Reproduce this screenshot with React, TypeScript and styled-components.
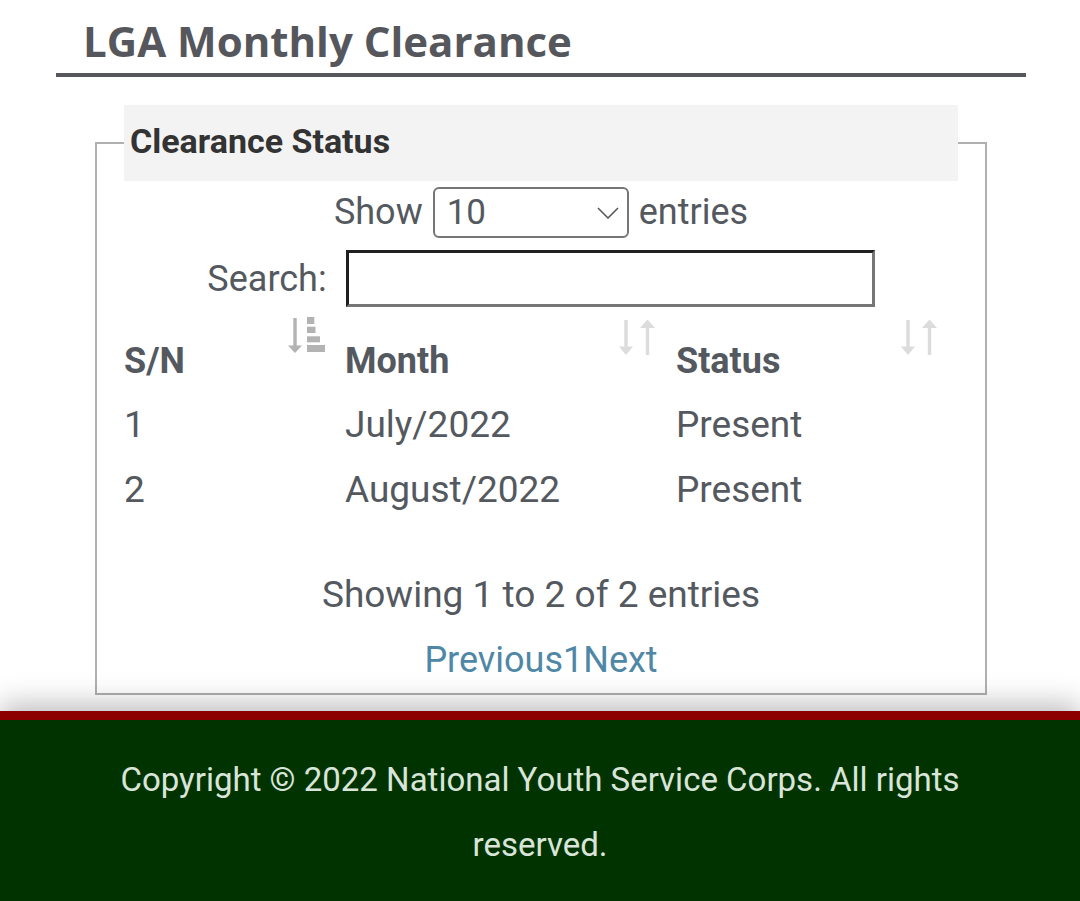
import React from "react";
import styled, { createGlobalStyle } from "styled-components";

const Global = createGlobalStyle`
  html, body { margin: 0; padding: 0; background: #ffffff; }
  body { font-family: Roboto, "Liberation Sans", sans-serif; color: #54595f; }
  * { box-sizing: border-box; }
`;

const Page = styled.div`
  display: flex;
  flex-direction: column;
  width: 1080px;
  overflow: hidden;
`;

const Main = styled.main`
  display: flex;
  flex-direction: column;
  padding-bottom: 16px;
`;

const Header = styled.header`
  margin-left: 56px;
  width: 970px;
  padding-top: 12px;
  padding-bottom: 4px;
  border-bottom: 4px solid #55575c;
`;

const Title = styled.h2`
  margin: 0;
  padding-left: 27px;
  font-family: "Open Sans", "Liberation Sans", sans-serif;
  font-weight: 700;
  font-size: 42px;
  line-height: 57px;
  color: #55575c;
`;

const Panel = styled.fieldset`
  margin: 28px 0 0 95px;
  width: 892px;
  border: 2px solid #b0b0b0;
  padding: 0 27px 0 27px;
  min-width: 0;
`;

const Legend = styled.legend`
  width: 100%;
  height: 76px;
  padding: 0 6px;
  background: #f3f3f3;
  font-weight: 700;
  font-size: 34px;
  line-height: 73px;
  color: #333333;
`;

const LengthRow = styled.div`
  display: flex;
  justify-content: center;
  align-items: center;
  gap: 10px;
  margin-top: 6px;
  font-size: 36px;
  line-height: 51px;
`;

const SelectWrap = styled.div`
  position: relative;
  width: 196px;
  height: 51px;
`;

const Select = styled.select`
  appearance: none;
  -webkit-appearance: none;
  width: 100%;
  height: 100%;
  border: 2px solid #767676;
  border-radius: 6px;
  background: #ffffff;
  padding: 0 0 0 12px;
  font-family: Roboto, "Liberation Sans", sans-serif;
  font-size: 35px;
  color: #54595f;
`;

const Chevron = styled.svg`
  position: absolute;
  right: 10px;
  top: 20px;
  pointer-events: none;
`;

const SearchRow = styled.div`
  display: flex;
  justify-content: center;
  align-items: center;
  gap: 19px;
  margin-top: 12px;
  font-size: 36px;
`;

const SearchInput = styled.input`
  width: 529px;
  height: 57px;
  border-style: solid;
  border-width: 3px;
  border-color: #1f1f1f #767676 #767676 #1f1f1f;
  background: #ffffff;
  padding: 0 8px;
  font-size: 32px;
`;

const Table = styled.table`
  margin-top: 20px;
  width: 834px;
  border-collapse: collapse;
  table-layout: fixed;
`;

const HeadCell = styled.th<{ $w: number }>`
  position: relative;
  width: ${(p) => p.$w}px;
  height: 65px;
  padding: 0;
  text-align: left;
  vertical-align: middle;
  font-size: 36px;
  font-weight: 700;
  color: #54595f;
  padding-top: 3px;
`;

const Cell = styled.td`
  height: 65px;
  padding: 0;
  vertical-align: middle;
  font-size: 37px;
  color: #54595f;
`;

const SortIcon = styled.svg<{ $top: number }>`
  position: absolute;
  right: 20px;
  top: ${(p) => p.$top}px;
`;

const Info = styled.div`
  margin-top: 40px;
  text-align: center;
  font-size: 37px;
  line-height: 65px;
`;

const Pager = styled.div`
  display: flex;
  justify-content: center;
  font-size: 36px;
  line-height: 66px;
`;

const PageLink = styled.a`
  color: #4f88a6;
  text-decoration: none;
  cursor: pointer;
`;

const Footer = styled.footer`
  position: relative;
  border-top: 9px solid #8d0000;
  background: #003300;
  box-shadow: 0 -6px 28px rgba(0, 0, 0, 0.28);
  padding: 27px 60px 30px;
  text-align: center;
  font-size: 33px;
  line-height: 65px;
  color: #dae5da;
`;

const ActiveSort = () => (
  <SortIcon $top={-10} width="37" height="37" viewBox="0 0 37 37">
    <g fill="#b3b3b3">
      <rect x="5.3" y="1" width="3.4" height="29" />
      <polygon points="0,28.5 14,28.5 7,36" />
      <rect x="19" y="0" width="7.3" height="7" />
      <rect x="19" y="9.7" width="8.5" height="6.3" />
      <rect x="19" y="19.3" width="13" height="6" />
      <rect x="19" y="28" width="18" height="7" />
    </g>
  </SortIcon>
);

const IdleSort = () => (
  <SortIcon $top={-8} width="37" height="37" viewBox="0 0 37 37">
    <g fill="#dcdcdc">
      <rect x="5.3" y="1" width="3.4" height="28" />
      <polygon points="0,27.5 14,27.5 7,36" />
      <polygon points="21,9 36,9 28.5,0.5" />
      <rect x="26.8" y="8" width="3.4" height="28" />
    </g>
  </SortIcon>
);

const rows = [
  { sn: "1", month: "July/2022", status: "Present" },
  { sn: "2", month: "August/2022", status: "Present" },
];

export default function App() {
  return (
    <>
      <Global />
      <Page>
        <Main>
          <Header>
            <Title>LGA Monthly Clearance</Title>
          </Header>
          <Panel>
            <Legend>Clearance Status</Legend>
            <LengthRow>
              <span>Show</span>
              <SelectWrap>
                <Select defaultValue="10">
                  <option value="10">10</option>
                  <option value="25">25</option>
                  <option value="50">50</option>
                  <option value="100">100</option>
                </Select>
                <Chevron width="22" height="12" viewBox="0 0 22 12">
                  <polyline points="1,1 11,11 21,1" fill="none" stroke="#5a5a5a" strokeWidth="1.6" />
                </Chevron>
              </SelectWrap>
              <span>entries</span>
            </LengthRow>
            <SearchRow>
              <label>Search:</label>
              <SearchInput type="search" />
            </SearchRow>
            <Table>
              <thead>
                <tr>
                  <HeadCell $w={221}>
                    S/N
                    <ActiveSort />
                  </HeadCell>
                  <HeadCell $w={331}>
                    Month
                    <IdleSort />
                  </HeadCell>
                  <HeadCell $w={282}>
                    Status
                    <IdleSort />
                  </HeadCell>
                </tr>
              </thead>
              <tbody>
                {rows.map((r) => (
                  <tr key={r.sn}>
                    <Cell>{r.sn}</Cell>
                    <Cell>{r.month}</Cell>
                    <Cell>{r.status}</Cell>
                  </tr>
                ))}
              </tbody>
            </Table>
            <Info>Showing 1 to 2 of 2 entries</Info>
            <Pager>
              <PageLink>Previous</PageLink>
              <PageLink>1</PageLink>
              <PageLink>Next</PageLink>
            </Pager>
          </Panel>
        </Main>
        <Footer>
          Copyright © 2022 National Youth Service Corps. All rights reserved.
        </Footer>
      </Page>
    </>
  );
}
